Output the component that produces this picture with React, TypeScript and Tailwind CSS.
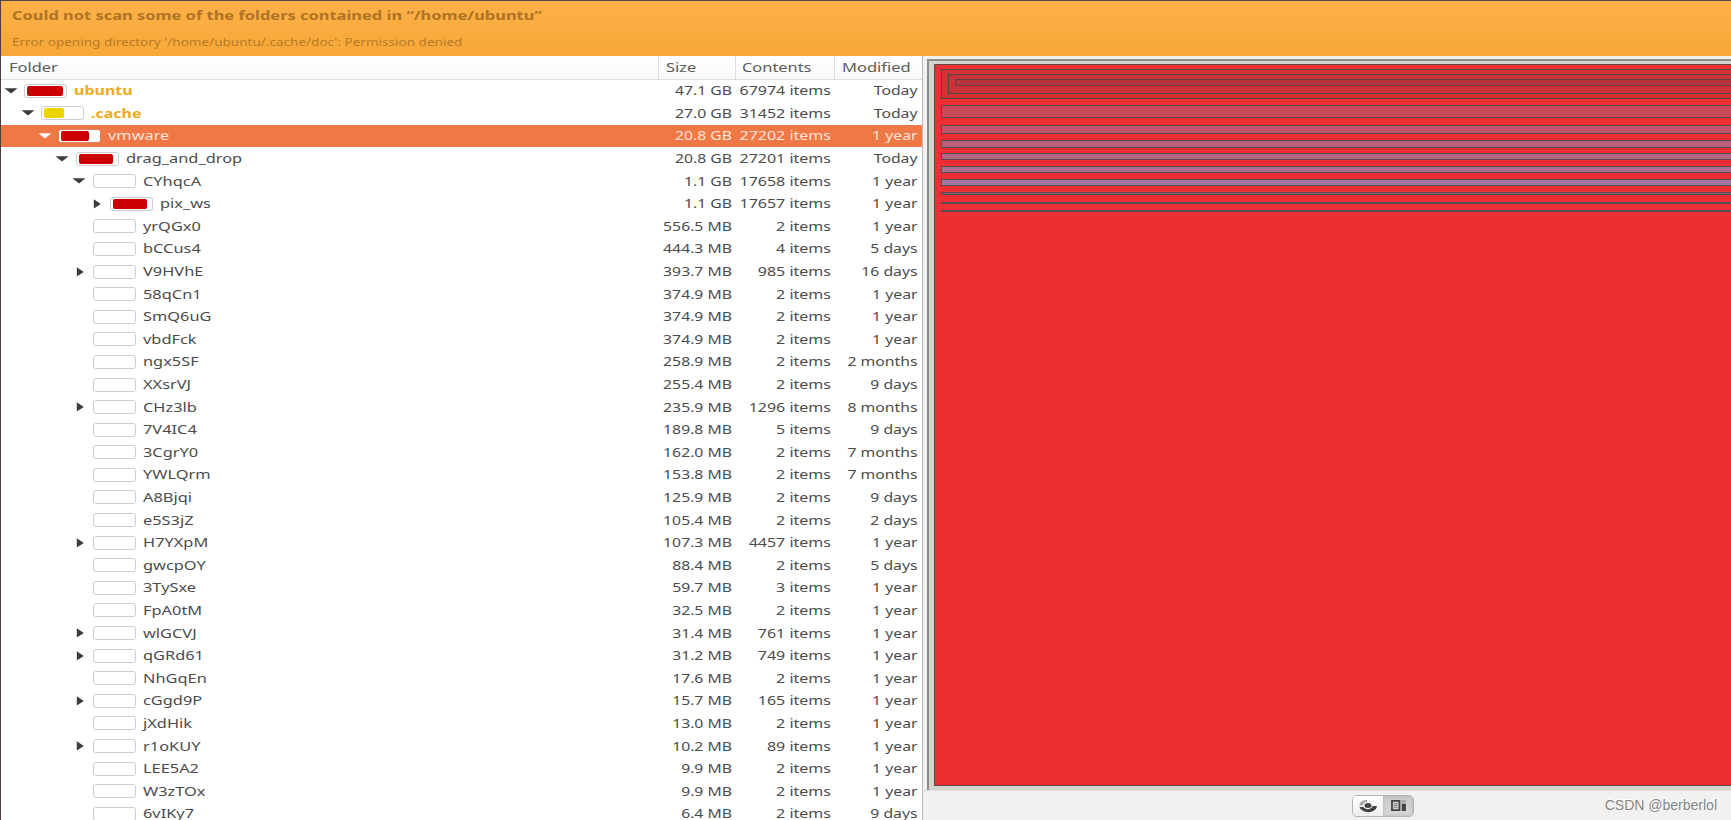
import React from "react";

type Item = { d: number; name: string; size: string; items: string; mod: string; arrow?: "down" | "right"; fill?: number; warn?: boolean; sel?: boolean };

const items: Item[] = [
  { d: 0, name: "ubuntu", size: "47.1 GB", items: "67974", mod: "Today", arrow: "down", fill: 98, warn: true },
  { d: 1, name: ".cache", size: "27.0 GB", items: "31452", mod: "Today", arrow: "down", fill: 53, warn: true },
  { d: 2, name: "vmware", size: "20.8 GB", items: "27202", mod: "1 year", arrow: "down", fill: 75, sel: true },
  { d: 3, name: "drag_and_drop", size: "20.8 GB", items: "27201", mod: "Today", arrow: "down", fill: 94 },
  { d: 4, name: "CYhqcA", size: "1.1 GB", items: "17658", mod: "1 year", arrow: "down" },
  { d: 5, name: "pix_ws", size: "1.1 GB", items: "17657", mod: "1 year", arrow: "right", fill: 94 },
  { d: 4, name: "yrQGx0", size: "556.5 MB", items: "2", mod: "1 year" },
  { d: 4, name: "bCCus4", size: "444.3 MB", items: "4", mod: "5 days" },
  { d: 4, name: "V9HVhE", size: "393.7 MB", items: "985", mod: "16 days", arrow: "right" },
  { d: 4, name: "58qCn1", size: "374.9 MB", items: "2", mod: "1 year" },
  { d: 4, name: "SmQ6uG", size: "374.9 MB", items: "2", mod: "1 year" },
  { d: 4, name: "vbdFck", size: "374.9 MB", items: "2", mod: "1 year" },
  { d: 4, name: "ngx5SF", size: "258.9 MB", items: "2", mod: "2 months" },
  { d: 4, name: "XXsrVJ", size: "255.4 MB", items: "2", mod: "9 days" },
  { d: 4, name: "CHz3lb", size: "235.9 MB", items: "1296", mod: "8 months", arrow: "right" },
  { d: 4, name: "7V4IC4", size: "189.8 MB", items: "5", mod: "9 days" },
  { d: 4, name: "3CgrY0", size: "162.0 MB", items: "2", mod: "7 months" },
  { d: 4, name: "YWLQrm", size: "153.8 MB", items: "2", mod: "7 months" },
  { d: 4, name: "A8Bjqi", size: "125.9 MB", items: "2", mod: "9 days" },
  { d: 4, name: "e5S3jZ", size: "105.4 MB", items: "2", mod: "2 days" },
  { d: 4, name: "H7YXpM", size: "107.3 MB", items: "4457", mod: "1 year", arrow: "right" },
  { d: 4, name: "gwcpOY", size: "88.4 MB", items: "2", mod: "5 days" },
  { d: 4, name: "3TySxe", size: "59.7 MB", items: "3", mod: "1 year" },
  { d: 4, name: "FpA0tM", size: "32.5 MB", items: "2", mod: "1 year" },
  { d: 4, name: "wlGCVJ", size: "31.4 MB", items: "761", mod: "1 year", arrow: "right" },
  { d: 4, name: "qGRd61", size: "31.2 MB", items: "749", mod: "1 year", arrow: "right" },
  { d: 4, name: "NhGqEn", size: "17.6 MB", items: "2", mod: "1 year" },
  { d: 4, name: "cGgd9P", size: "15.7 MB", items: "165", mod: "1 year", arrow: "right" },
  { d: 4, name: "jXdHik", size: "13.0 MB", items: "2", mod: "1 year" },
  { d: 4, name: "r1oKUY", size: "10.2 MB", items: "89", mod: "1 year", arrow: "right" },
  { d: 4, name: "LEE5A2", size: "9.9 MB", items: "2", mod: "1 year" },
  { d: 4, name: "W3zTOx", size: "9.9 MB", items: "2", mod: "1 year" },
  { d: 4, name: "6vIKy7", size: "6.4 MB", items: "2", mod: "9 days" },
];

function Row({ it }: { it: Item }) {
  return (
    <div className={`flex h-[22.6px] shrink-0 items-center ${it.sel ? "bg-[#f07746] text-[#fde4d8]" : "text-[#4c4c4c]"}`}>
      <div className="flex w-[657px] items-center" style={{ paddingLeft: it.d * 17.1 + 0.7 }}>
        <svg className="h-[10px] w-[18px] shrink-0" viewBox="0 0 18 10">
          {it.arrow === "down" && <path d="M2.500 2.200h13L9 7.600z" fill={it.sel ? "#fff" : "#3c3c3c"} />}
          {it.arrow === "right" && <path d="M6.800 0.200v9.400l7-4.700z" fill="#3c3c3c" />}
        </svg>
        <div className={`ml-[4.5px] h-[14px] w-[43px] shrink-0 rounded-[3px] border bg-white px-[2px] py-[1px] ${it.sel ? "border-[#d9835f]" : "border-[#cdcdcd]"}`}>
          {it.fill && (
            <div className={`h-full rounded-[2px] ${it.warn && it.d === 1 ? "bg-[#edd400]" : "bg-[#cc0000]"}`} style={{ width: `${it.fill}%` }} />
          )}
        </div>
        <span className={`ml-[7px] origin-left pt-[1.5px] ${it.warn ? "scale-x-[1.28] font-bold text-[#efaa20]" : "scale-x-[1.31]"}`}>{it.name}</span>
      </div>
      <span className="w-[74px] origin-right scale-x-[1.26] pt-[1.5px] text-right">{it.size}</span>
      <span className="w-[99px] origin-right scale-x-[1.28] pt-[1.5px] text-right">{it.items} items</span>
      <span className="w-[86.5px] origin-right scale-x-[1.26] pt-[1.5px] text-right">{it.mod}</span>
    </div>
  );
}

const bars = [
  "mt-[6px] h-[13px] bg-[#c94859]",
  "mt-[7px] h-[9px] bg-[#c15468]",
  "mt-[6px] h-[8px] bg-[#b95f7b]",
  "mt-[5px] h-[7px] bg-[#b26687]",
  "mt-[6px] h-[7px] bg-[#a96e92]",
  "mt-[6px] h-[7px] bg-[#a3779f]",
  "mt-[6px] h-[3px] bg-[#8d6270]",
  "mt-[7px] h-[2px] bg-[#4f5b62]",
  "mt-[6px] h-[2px] bg-[#4d4b48]",
];

export default function App() {
  return (
    <div className="flex h-[820px] w-[1731px] flex-col overflow-hidden border-l-[1.5px] border-[#4d3c43] bg-[#f2f1f0] font-['Noto_Sans',sans-serif] text-[12.5px] leading-none whitespace-nowrap">
      <header className="flex h-[55.5px] shrink-0 flex-col border-t border-[#4d4a48] bg-linear-to-b from-[#feb148] to-[#f6a736] pl-[11px]">
        <div className="mt-[8px] h-[18px] origin-left scale-x-[1.315] self-start text-[12.5px] leading-[14px] font-bold text-[#ad7425]">Could not scan some of the folders contained in “/home/ubuntu”</div>
        <div className="mt-[8px] origin-left scale-x-[1.23] self-start text-[11px] leading-[14px] text-[#b77a28]">Error opening directory '/home/ubuntu/.cache/doc': Permission denied</div>
      </header>
      <div className="flex min-h-0 flex-1">
        <section className="flex w-[922px] shrink-0 flex-col overflow-hidden border-r border-[#b9b8b5] bg-white">
          <div className="flex h-[24px] shrink-0 items-center border-b border-[#dedede] bg-linear-to-b from-white to-[#f9f9f9] text-[#5b5b5b]">
            <div className="w-[657px] pt-[1.5px] pl-[7.5px]"><span className="inline-block origin-left scale-x-[1.31]">Folder</span></div>
            <div className="flex h-full w-[76.5px] items-center border-l border-[#dfdfdf] pl-[6.5px]"><span className="origin-left scale-x-[1.31] pt-[1.5px]">Size</span></div>
            <div className="flex h-full w-[99px] items-center border-l border-[#dfdfdf] pl-[6.5px]"><span className="origin-left scale-x-[1.31] pt-[1.5px]">Contents</span></div>
            <div className="flex h-full flex-1 items-center border-l border-[#dfdfdf] pl-[7px]"><span className="origin-left scale-x-[1.32] pt-[1.5px]">Modified</span></div>
          </div>
          {items.map((it) => <Row key={it.name} it={it} />)}
        </section>
        <section className="flex min-w-0 flex-1 flex-col pt-[3.5px]">
          <div className="ml-[4px] flex h-[731px] flex-col border-t-2 border-l-2 border-[#8b8d87] bg-[#d3d6cf] pt-[3px] pb-[4px] pl-[5px]">
            <div className="min-h-0 flex-1 border-y border-l border-[#5e4743] bg-[#ed2e33] pt-[4px] pl-[6px]">
              <div className="h-[30px] border-y border-l border-[#514846] bg-[#da3034] pt-[4px] pl-[6px]">
                <div className="h-[20px] border-y border-l border-[#514846] bg-[#ca3138] pt-[4px] pl-[6px]">
                  <div className="h-[7px] border-y border-l border-[#654146] bg-[#b5333b]" />
                </div>
              </div>
              {bars.map((b) => <div key={b} className={`border-y border-l border-[#554c50] ${b}`} />)}
            </div>
          </div>
          <footer className="flex flex-1 items-center border-t border-[#dcdbd8]">
            <div className="ml-[429px] flex h-[22px] w-[62px] overflow-hidden rounded-[5px] border border-[#b5b4b2]">
              <div className="flex w-[30px] items-center justify-center bg-linear-to-b from-white to-[#eeeeed]">
                <svg className="h-[14px] w-[20px]" viewBox="0 0 20 14">
                  <path d="M1.500 6.500C1.500 3 4.500 1 9 1v2C6.500 3 5 4.500 5 6.500z" fill="#aaa" />
                  <path d="M1.500 8h4c1.500 3 8 3 9-1h4.500c-1 8-15 8-17.500 1z" fill="#444" />
                  <ellipse cx="10" cy="6.500" rx="3.500" ry="2.500" fill="#444" />
                </svg>
              </div>
              <div className="flex flex-1 items-center justify-center bg-linear-to-b from-[#cbcac9] to-[#d8d7d6] shadow-[inset_0_0_3px_#aaa]">
                <svg className="h-[13px] w-[17px]" viewBox="0 0 18 14">
                  <path d="M1 1h10v12H1z" fill="#444" />
                  <path d="M3 3h6v8H3z" fill="#d2d1d0" />
                  <path d="M4 5h4M4 7h4M4 9h4" stroke="#777" />
                  <path d="M12 1h5v3h-5z" fill="#aaa" />
                  <path d="M12.500 5h4.500v8h-4.500z" fill="#444" />
                </svg>
              </div>
            </div>
            <span className="mr-[14px] mb-[2px] ml-auto font-['Liberation_Sans',sans-serif] text-[14px] text-[#858585] [text-shadow:-1px_-1px_0_#fff]">CSDN @berberlol</span>
          </footer>
        </section>
      </div>
    </div>
  );
}
